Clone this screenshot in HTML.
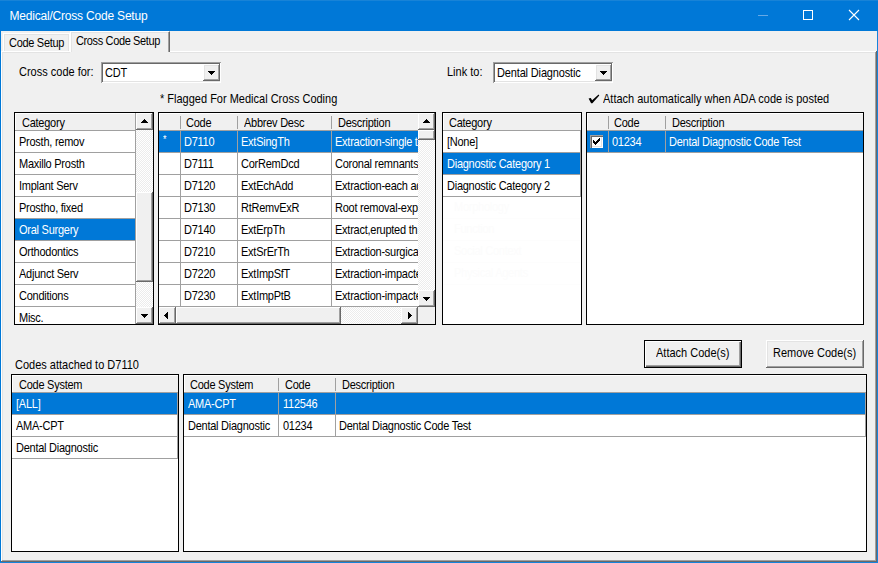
<!DOCTYPE html><html><head><meta charset="utf-8"><title>Medical/Cross Code Setup</title><style>
*{margin:0;padding:0;box-sizing:border-box}
html,body{width:878px;height:563px;overflow:hidden;background:#f0f0f0}
body{position:relative;font-family:"Liberation Sans",sans-serif;font-size:11px;color:#000}
div,span,svg{position:absolute}
.t{white-space:nowrap;line-height:13px;height:13px;transform:scaleY(1.12);transform-origin:0 10px}
.raised{background:#f0f0f0;box-shadow:inset -1px -1px #696969,inset 1px 1px #fff,inset -2px -2px #a0a0a0,inset 2px 2px #e3e3e3}
.sb{background:#f0f0f0;box-shadow:inset -1px -1px #696969,inset 1px 1px #fff,inset -2px -2px #a0a0a0}
.track{background-color:#f5f5f5;background-image:repeating-conic-gradient(#fff 0 25%,#ececec 0 50%);background-size:2px 2px}
.sunk{background:#fff;box-shadow:inset 1px 1px #a0a0a0,inset -1px -1px #fff,inset 2px 2px #696969,inset -2px -2px #e3e3e3}
.lb{border:1px solid #000;background:#fff;overflow:hidden}
.sel{background:#0078d7;color:#fff}
.clip{overflow:hidden}
</style></head><body>
<div style="left:0px;top:0px;width:878px;height:31px;background:#0078d7"></div>
<div style="left:0px;top:0px;width:878px;height:1px;background:#1883d7"></div>
<span class="t" style="left:9.5px;top:9px;color:#fff;font-size:12px;line-height:14px;height:14px;letter-spacing:-0.2px;transform:none">Medical/Cross Code Setup</span>
<div style="left:758px;top:15px;width:10px;height:1px;background:#66a9e6"></div>
<div style="left:803px;top:10px;width:10px;height:10px;border:1px solid #fff"></div>
<svg style="left:848px;top:9px" width="12" height="12" viewBox="0 0 12 12"><path d="M1 1L11 11M11 1L1 11" stroke="#fff" stroke-width="1.1" fill="none"/></svg>
<div style="left:0px;top:31px;width:1px;height:532px;background:#0078d7"></div>
<div style="left:877px;top:31px;width:1px;height:532px;background:#1584dc"></div>
<div style="left:0px;top:562px;width:878px;height:1px;background:#1584dc"></div>
<div style="left:1px;top:51px;width:876px;height:1px;background:#fff"></div>
<div style="left:1px;top:51px;width:1px;height:510px;background:#fff"></div>
<div style="left:2px;top:52px;width:1px;height:508px;background:#e3e3e3"></div>
<div style="left:2px;top:52px;width:68px;height:1px;background:#e3e3e3"></div>
<div style="left:170px;top:52px;width:705px;height:1px;background:#e3e3e3"></div>
<div style="left:875px;top:52px;width:1px;height:509px;background:#a0a0a0"></div>
<div style="left:876px;top:51px;width:1px;height:511px;background:#696969"></div>
<div style="left:2px;top:560px;width:874px;height:1px;background:#a0a0a0"></div>
<div style="left:1px;top:561px;width:876px;height:1px;background:#696969"></div>
<div style="left:3px;top:33px;width:67px;height:18px;border-top:1px solid #fff;border-left:1px solid #fff;border-right:1px solid #fff;box-shadow:inset 1px 1px #e3e3e3,inset -1px 0 #e3e3e3"></div>
<span class="t" style="left:9px;top:37px;letter-spacing:-0.3px">Code Setup</span>
<div style="left:70px;top:31px;width:100px;height:21px;background:#f0f0f0;border-top:1px solid #fff;border-left:1px solid #fff;border-right:1px solid #696969;box-shadow:inset -1px 0 #a0a0a0,inset 1px 1px #e3e3e3"></div>
<span class="t" style="left:76px;top:35px;letter-spacing:-0.37px">Cross Code Setup</span>
<span class="t" style="left:19px;top:66px;">Cross code for:</span>
<div class="sunk" style="left:101px;top:62px;width:120px;height:21px;"></div>
<span class="t" style="left:105px;top:67px;letter-spacing:-0.15px">CDT</span>
<div class="raised" style="left:203px;top:64px;width:17px;height:17px;"></div>
<svg style="left:208px;top:71px" width="7" height="4" viewBox="0 0 7 4" shape-rendering="crispEdges"><path d="M0 0h7v1h-7zM1 1h5v1h-5zM2 2h3v1h-3zM3 3h1v1h-1z" fill="#000"/></svg>
<span class="t" style="left:447px;top:66px;">Link to:</span>
<div class="sunk" style="left:493px;top:62px;width:120px;height:21px;"></div>
<span class="t" style="left:497px;top:67px;letter-spacing:-0.15px">Dental Diagnostic</span>
<div class="raised" style="left:595px;top:64px;width:17px;height:17px;"></div>
<svg style="left:600px;top:71px" width="7" height="4" viewBox="0 0 7 4" shape-rendering="crispEdges"><path d="M0 0h7v1h-7zM1 1h5v1h-5zM2 2h3v1h-3zM3 3h1v1h-1z" fill="#000"/></svg>
<span class="t" style="left:160px;top:93px;">* Flagged For Medical Cross Coding</span>
<svg style="left:588px;top:94px" width="12" height="10" viewBox="0 0 12 10"><path d="M0.6 4.6L2.8 3.9L4.1 6.3L10.6 0.6L11.3 1.4L4.4 9.2L3.1 9.2Z" fill="#000"/></svg>
<span class="t" style="left:603px;top:93px;">Attach automatically when ADA code is posted</span>
<div class="lb" style="left:14px;top:112px;width:140px;height:213px;"></div>
<div style="left:15px;top:113px;width:120px;height:18px;background:#f0f0f0;border-bottom:1px solid #a0a0a0;box-shadow:inset 1px 1px #fff"></div>
<span class="t" style="left:22px;top:117px;letter-spacing:-0.25px">Category</span>
<span class="t" style="left:19px;top:136px;letter-spacing:-0.25px">Prosth, remov</span>
<div style="left:15px;top:152px;width:120px;height:1px;background:#a0a0a0"></div>
<span class="t" style="left:19px;top:158px;letter-spacing:-0.25px">Maxillo Prosth</span>
<div style="left:15px;top:174px;width:120px;height:1px;background:#a0a0a0"></div>
<span class="t" style="left:19px;top:180px;letter-spacing:-0.25px">Implant Serv</span>
<div style="left:15px;top:196px;width:120px;height:1px;background:#a0a0a0"></div>
<span class="t" style="left:19px;top:202px;letter-spacing:-0.25px">Prostho, fixed</span>
<div style="left:15px;top:218px;width:120px;height:1px;background:#a0a0a0"></div>
<div style="left:15px;top:219px;width:120px;height:21px;background:#0078d7"></div>
<span class="t" style="left:19px;top:224px;color:#fff;letter-spacing:-0.25px">Oral Surgery</span>
<div style="left:15px;top:240px;width:120px;height:1px;background:#a0a0a0"></div>
<span class="t" style="left:19px;top:246px;letter-spacing:-0.25px">Orthodontics</span>
<div style="left:15px;top:262px;width:120px;height:1px;background:#a0a0a0"></div>
<span class="t" style="left:19px;top:268px;letter-spacing:-0.25px">Adjunct Serv</span>
<div style="left:15px;top:284px;width:120px;height:1px;background:#a0a0a0"></div>
<span class="t" style="left:19px;top:290px;letter-spacing:-0.25px">Conditions</span>
<div style="left:15px;top:306px;width:120px;height:1px;background:#a0a0a0"></div>
<span class="t" style="left:19px;top:312px;letter-spacing:-0.25px">Misc.</span>
<div style="left:135px;top:113px;width:1px;height:211px;background:#a0a0a0"></div>
<div class="track" style="left:136px;top:113px;width:17px;height:211px;"></div>
<div class="sb" style="left:136px;top:113px;width:17px;height:17px;"></div>
<svg style="left:141px;top:119px" width="7" height="4" viewBox="0 0 7 4" shape-rendering="crispEdges"><path d="M3 0h1v1h-1zM2 1h3v1h-3zM1 2h5v1h-5zM0 3h7v1h-7z" fill="#000"/></svg>
<div class="sb" style="left:136px;top:307px;width:17px;height:17px;"></div>
<svg style="left:141px;top:314px" width="7" height="4" viewBox="0 0 7 4" shape-rendering="crispEdges"><path d="M0 0h7v1h-7zM1 1h5v1h-5zM2 2h3v1h-3zM3 3h1v1h-1z" fill="#000"/></svg>
<div class="sb" style="left:136px;top:192px;width:17px;height:90px;"></div>
<div class="lb" style="left:158px;top:112px;width:278px;height:213px;"></div>
<div style="left:159px;top:113px;width:259px;height:18px;background:#f0f0f0;border-bottom:1px solid #a0a0a0;box-shadow:inset 1px 1px #fff"></div>
<div style="left:180px;top:116px;width:1px;height:13px;background:#a0a0a0"></div>
<div style="left:237px;top:116px;width:1px;height:13px;background:#a0a0a0"></div>
<div style="left:331px;top:116px;width:1px;height:13px;background:#a0a0a0"></div>
<span class="t" style="left:186px;top:117px;letter-spacing:-0.25px">Code</span>
<span class="t" style="left:244px;top:117px;letter-spacing:-0.25px">Abbrev Desc</span>
<span class="t" style="left:338px;top:117px;letter-spacing:-0.25px">Description</span>
<div style="left:159px;top:131px;width:259px;height:21px;background:#0078d7"></div>
<span class="t" style="left:163px;top:134px;color:#fff;font-size:9px">*</span>
<span class="t" style="left:184px;top:136px;color:#fff;letter-spacing:-0.25px">D7110</span>
<span class="t" style="left:241px;top:136px;color:#fff;letter-spacing:-0.25px">ExtSingTh</span>
<div class="clip" style="left:332px;top:131px;width:86px;height:21px"><span class="t" style="left:3px;top:5px;color:#fff;letter-spacing:-0.25px">Extraction-single tooth</span></div>
<div style="left:159px;top:152px;width:259px;height:1px;background:#a0a0a0"></div>
<span class="t" style="left:184px;top:158px;;letter-spacing:-0.25px">D7111</span>
<span class="t" style="left:241px;top:158px;;letter-spacing:-0.25px">CorRemDcd</span>
<div class="clip" style="left:332px;top:153px;width:86px;height:21px"><span class="t" style="left:3px;top:5px;;letter-spacing:-0.25px">Coronal remnants-deciduous</span></div>
<div style="left:159px;top:174px;width:259px;height:1px;background:#a0a0a0"></div>
<span class="t" style="left:184px;top:180px;;letter-spacing:-0.25px">D7120</span>
<span class="t" style="left:241px;top:180px;;letter-spacing:-0.25px">ExtEchAdd</span>
<div class="clip" style="left:332px;top:175px;width:86px;height:21px"><span class="t" style="left:3px;top:5px;;letter-spacing:-0.25px">Extraction-each additional</span></div>
<div style="left:159px;top:196px;width:259px;height:1px;background:#a0a0a0"></div>
<span class="t" style="left:184px;top:202px;;letter-spacing:-0.25px">D7130</span>
<span class="t" style="left:241px;top:202px;;letter-spacing:-0.25px">RtRemvExR</span>
<div class="clip" style="left:332px;top:197px;width:86px;height:21px"><span class="t" style="left:3px;top:5px;;letter-spacing:-0.25px">Root removal-exposed roots</span></div>
<div style="left:159px;top:218px;width:259px;height:1px;background:#a0a0a0"></div>
<span class="t" style="left:184px;top:224px;;letter-spacing:-0.25px">D7140</span>
<span class="t" style="left:241px;top:224px;;letter-spacing:-0.25px">ExtErpTh</span>
<div class="clip" style="left:332px;top:219px;width:86px;height:21px"><span class="t" style="left:3px;top:5px;;letter-spacing:-0.25px">Extract,erupted th</span></div>
<div style="left:159px;top:240px;width:259px;height:1px;background:#a0a0a0"></div>
<span class="t" style="left:184px;top:246px;;letter-spacing:-0.25px">D7210</span>
<span class="t" style="left:241px;top:246px;;letter-spacing:-0.25px">ExtSrErTh</span>
<div class="clip" style="left:332px;top:241px;width:86px;height:21px"><span class="t" style="left:3px;top:5px;;letter-spacing:-0.25px">Extraction-surgical</span></div>
<div style="left:159px;top:262px;width:259px;height:1px;background:#a0a0a0"></div>
<span class="t" style="left:184px;top:268px;;letter-spacing:-0.25px">D7220</span>
<span class="t" style="left:241px;top:268px;;letter-spacing:-0.25px">ExtImpSfT</span>
<div class="clip" style="left:332px;top:263px;width:86px;height:21px"><span class="t" style="left:3px;top:5px;;letter-spacing:-0.25px">Extraction-impacted soft</span></div>
<div style="left:159px;top:284px;width:259px;height:1px;background:#a0a0a0"></div>
<span class="t" style="left:184px;top:290px;;letter-spacing:-0.25px">D7230</span>
<span class="t" style="left:241px;top:290px;;letter-spacing:-0.25px">ExtImpPtB</span>
<div class="clip" style="left:332px;top:285px;width:86px;height:21px"><span class="t" style="left:3px;top:5px;;letter-spacing:-0.25px">Extraction-impacted partial</span></div>
<div style="left:159px;top:306px;width:259px;height:1px;background:#a0a0a0"></div>
<div style="left:180px;top:131px;width:1px;height:176px;background:#a0a0a0"></div>
<div style="left:237px;top:131px;width:1px;height:176px;background:#a0a0a0"></div>
<div style="left:331px;top:131px;width:1px;height:176px;background:#a0a0a0"></div>
<div class="track" style="left:418px;top:113px;width:17px;height:194px;"></div>
<div class="sb" style="left:418px;top:113px;width:17px;height:17px;"></div>
<svg style="left:423px;top:119px" width="7" height="4" viewBox="0 0 7 4" shape-rendering="crispEdges"><path d="M3 0h1v1h-1zM2 1h3v1h-3zM1 2h5v1h-5zM0 3h7v1h-7z" fill="#000"/></svg>
<div class="sb" style="left:418px;top:130px;width:17px;height:10px;"></div>
<div class="sb" style="left:418px;top:290px;width:17px;height:17px;"></div>
<svg style="left:423px;top:297px" width="7" height="4" viewBox="0 0 7 4" shape-rendering="crispEdges"><path d="M0 0h7v1h-7zM1 1h5v1h-5zM2 2h3v1h-3zM3 3h1v1h-1z" fill="#000"/></svg>
<div class="track" style="left:159px;top:307px;width:259px;height:17px;"></div>
<div class="sb" style="left:159px;top:307px;width:17px;height:17px;"></div>
<svg style="left:164px;top:312px" width="4" height="7" viewBox="0 0 4 7" shape-rendering="crispEdges"><path d="M3 0h1v7h-1zM2 1h1v5h-1zM1 2h1v3h-1zM0 3h1v1h-1z" fill="#000"/></svg>
<div class="sb" style="left:176px;top:307px;width:165px;height:17px;"></div>
<div class="sb" style="left:401px;top:307px;width:17px;height:17px;"></div>
<svg style="left:408px;top:312px" width="4" height="7" viewBox="0 0 4 7" shape-rendering="crispEdges"><path d="M0 0h1v7h-1zM1 1h1v5h-1zM2 2h1v3h-1zM3 3h1v1h-1z" fill="#000"/></svg>
<div style="left:418px;top:307px;width:17px;height:17px;background:#f0f0f0"></div>
<div class="lb" style="left:442px;top:112px;width:140px;height:213px;"></div>
<div style="left:443px;top:113px;width:138px;height:18px;background:#f0f0f0;border-bottom:1px solid #a0a0a0;box-shadow:inset 1px 1px #fff"></div>
<span class="t" style="left:449px;top:117px;letter-spacing:-0.25px">Category</span>
<span class="t" style="left:447px;top:136px;;letter-spacing:-0.25px">[None]</span>
<div style="left:443px;top:152px;width:137px;height:1px;background:#a0a0a0"></div>
<div style="left:443px;top:153px;width:137px;height:21px;background:#0078d7"></div>
<span class="t" style="left:447px;top:158px;color:#fff;letter-spacing:-0.25px">Diagnostic Category 1</span>
<div style="left:443px;top:174px;width:137px;height:1px;background:#a0a0a0"></div>
<span class="t" style="left:447px;top:180px;;letter-spacing:-0.25px">Diagnostic Category 2</span>
<div style="left:443px;top:196px;width:137px;height:1px;background:#a0a0a0"></div>
<div style="left:580px;top:131px;width:1px;height:66px;background:#a0a0a0"></div>
<span class="t" style="left:454px;top:201px;color:#fcfcfc;letter-spacing:-0.25px">Morphology</span>
<div style="left:443px;top:218px;width:137px;height:1px;background:#fdfdfd"></div>
<span class="t" style="left:454px;top:223px;color:#fcfcfc;letter-spacing:-0.25px">Function</span>
<div style="left:443px;top:240px;width:137px;height:1px;background:#fdfdfd"></div>
<span class="t" style="left:454px;top:245px;color:#fcfcfc;letter-spacing:-0.25px">Social Context</span>
<div style="left:443px;top:262px;width:137px;height:1px;background:#fdfdfd"></div>
<span class="t" style="left:454px;top:267px;color:#fcfcfc;letter-spacing:-0.25px">Physical Agents</span>
<div style="left:443px;top:284px;width:137px;height:1px;background:#fdfdfd"></div>
<div class="lb" style="left:586px;top:112px;width:278px;height:213px;"></div>
<div style="left:587px;top:113px;width:276px;height:18px;background:#f0f0f0;border-bottom:1px solid #a0a0a0;box-shadow:inset 1px 1px #fff"></div>
<div style="left:608px;top:116px;width:1px;height:13px;background:#a0a0a0"></div>
<div style="left:665px;top:116px;width:1px;height:13px;background:#a0a0a0"></div>
<span class="t" style="left:614px;top:117px;letter-spacing:-0.25px">Code</span>
<span class="t" style="left:672px;top:117px;letter-spacing:-0.25px">Description</span>
<div style="left:587px;top:131px;width:276px;height:21px;background:#0078d7"></div>
<div style="left:608px;top:131px;width:1px;height:21px;background:#a0a0a0"></div>
<div style="left:665px;top:131px;width:1px;height:21px;background:#a0a0a0"></div>
<span class="t" style="left:612px;top:136px;color:#fff;letter-spacing:-0.25px">01234</span>
<span class="t" style="left:669px;top:136px;color:#fff;letter-spacing:-0.25px">Dental Diagnostic Code Test</span>
<div style="left:587px;top:152px;width:276px;height:1px;background:#a0a0a0"></div>
<div style="left:590px;top:135px;width:13px;height:13px;background:#fff;box-shadow:inset 1px 1px #a0a0a0,inset 2px 2px #696969,inset -1px -1px #fff,inset -2px -2px #e3e3e3"></div>
<svg style="left:593px;top:138px" width="7" height="7" viewBox="0 0 7 7" shape-rendering="crispEdges"><path d="M6 0h1v1h-1zM5 1h2v1h-2zM0 2h1v1h-1zM4 2h3v1h-3zM0 3h2v1h-2zM3 3h3v1h-3zM0 4h5v1h-5zM1 5h3v1h-3zM2 6h1v1h-1z" fill="#000"/></svg>
<div style="left:644px;top:340px;width:98px;height:28px;background:#f0f0f0;border:1px solid #000;box-shadow:inset 1px 1px #fff,inset -1px -1px #696969,inset -2px -2px #a0a0a0"></div>
<span class="t" style="left:656px;top:347px;">Attach Code(s)</span>
<div class="raised" style="left:766px;top:340px;width:98px;height:28px;"></div>
<span class="t" style="left:773px;top:347px;">Remove Code(s)</span>
<span class="t" style="left:15px;top:359px;">Codes attached to D7110</span>
<div class="lb" style="left:11px;top:374px;width:168px;height:178px;"></div>
<div style="left:12px;top:375px;width:166px;height:18px;background:#f0f0f0;border-bottom:1px solid #a0a0a0;box-shadow:inset 1px 1px #fff"></div>
<span class="t" style="left:19px;top:379px;letter-spacing:-0.25px">Code System</span>
<div style="left:12px;top:393px;width:165px;height:21px;background:#0078d7"></div>
<span class="t" style="left:16px;top:398px;color:#fff;letter-spacing:-0.25px">[ALL]</span>
<div style="left:12px;top:414px;width:165px;height:1px;background:#a0a0a0"></div>
<span class="t" style="left:16px;top:420px;;letter-spacing:-0.25px">AMA-CPT</span>
<div style="left:12px;top:436px;width:165px;height:1px;background:#a0a0a0"></div>
<span class="t" style="left:16px;top:442px;;letter-spacing:-0.25px">Dental Diagnostic</span>
<div style="left:12px;top:458px;width:165px;height:1px;background:#a0a0a0"></div>
<div style="left:177px;top:393px;width:1px;height:66px;background:#a0a0a0"></div>
<div class="lb" style="left:183px;top:374px;width:684px;height:178px;"></div>
<div style="left:184px;top:375px;width:682px;height:18px;background:#f0f0f0;border-bottom:1px solid #a0a0a0;box-shadow:inset 1px 1px #fff"></div>
<div style="left:278px;top:378px;width:1px;height:13px;background:#a0a0a0"></div>
<div style="left:335px;top:378px;width:1px;height:13px;background:#a0a0a0"></div>
<span class="t" style="left:190px;top:379px;letter-spacing:-0.25px">Code System</span>
<span class="t" style="left:285px;top:379px;letter-spacing:-0.25px">Code</span>
<span class="t" style="left:342px;top:379px;letter-spacing:-0.25px">Description</span>
<div style="left:184px;top:393px;width:681px;height:21px;background:#0078d7"></div>
<span class="t" style="left:188px;top:398px;color:#fff;letter-spacing:-0.25px">AMA-CPT</span>
<span class="t" style="left:283px;top:398px;color:#fff;letter-spacing:-0.25px">112546</span>
<span class="t" style="left:339px;top:398px;color:#fff;letter-spacing:-0.25px"></span>
<div style="left:278px;top:393px;width:1px;height:21px;background:#a0a0a0"></div>
<div style="left:335px;top:393px;width:1px;height:21px;background:#a0a0a0"></div>
<div style="left:184px;top:414px;width:681px;height:1px;background:#a0a0a0"></div>
<span class="t" style="left:188px;top:420px;;letter-spacing:-0.25px">Dental Diagnostic</span>
<span class="t" style="left:283px;top:420px;;letter-spacing:-0.25px">01234</span>
<span class="t" style="left:339px;top:420px;;letter-spacing:-0.25px">Dental Diagnostic Code Test</span>
<div style="left:278px;top:415px;width:1px;height:21px;background:#a0a0a0"></div>
<div style="left:335px;top:415px;width:1px;height:21px;background:#a0a0a0"></div>
<div style="left:184px;top:436px;width:681px;height:1px;background:#a0a0a0"></div>
<div style="left:865px;top:393px;width:1px;height:44px;background:#a0a0a0"></div>
</body></html>
